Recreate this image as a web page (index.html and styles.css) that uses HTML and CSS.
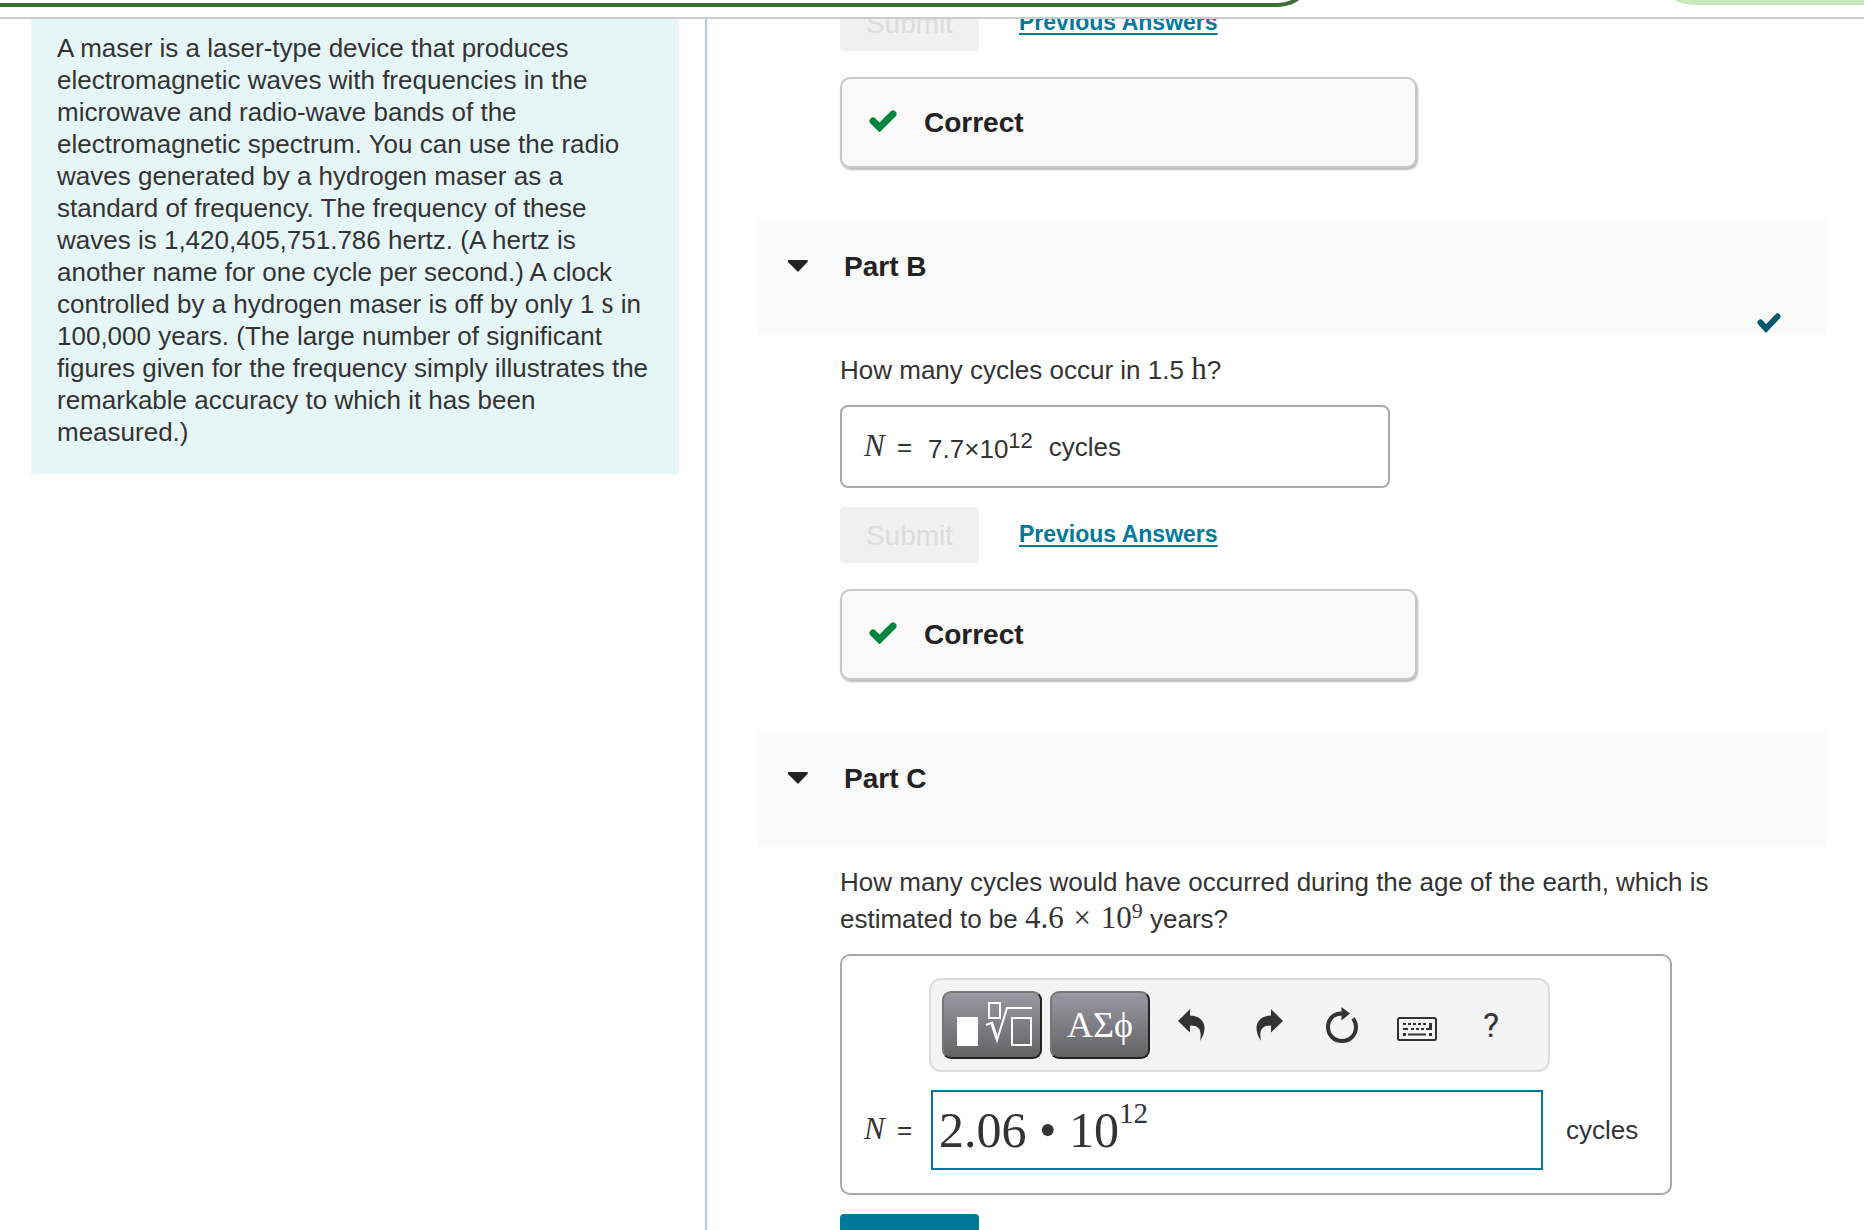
FILE: index.html
```html
<!DOCTYPE html>
<html lang="en">
<head>
<meta charset="utf-8">
<meta name="viewport" content="width=device-width, initial-scale=1">
<title>Maser frequency problem</title>
<link rel="stylesheet" href="styles.css">
</head>
<body>
<header class="topbar">
  <div class="pill pill-outline"></div>
  <div class="pill pill-solid"></div>
</header>
<main class="panes">
  <aside class="context">
    <div class="context-box">
      <p>A maser is a laser-type device that produces electromagnetic waves with frequencies in the microwave and radio-wave bands of the electromagnetic spectrum. You can use the radio waves generated by a hydrogen maser as a standard of frequency. The frequency of these waves is 1,420,405,751.786 hertz. (A hertz is another name for one cycle per second.) A clock controlled by a hydrogen maser is off by only 1 <span class="math">s</span> in 100,000 years. (The large number of significant figures given for the frequency simply illustrates the remarkable accuracy to which it has been measured.)</p>
    </div>
  </aside>

  <div class="work">
    <div class="work-content">
      <section class="part">
        <div class="part-body">
          <div class="actions">
            <button class="submit" type="button" disabled>Submit</button>
            <a class="previous" href="#">Previous Answers</a>
          </div>
          <div class="feedback">
            <svg class="tick" viewBox="0 0 28 22" aria-hidden="true"><path d="M4 11 L10.500 17.500 L24 4"/></svg>
            <span>Correct</span>
          </div>
        </div>
      </section>

      <section class="part">
        <div class="part-head">
          <button class="toggle" type="button" aria-expanded="true" aria-label="Collapse Part B">
            <svg viewBox="0 0 22 14" aria-hidden="true"><path d="M1.500 0 H20 Q21.500 0.500 20.500 2 L11 12 L1 2 Q0 0.500 1.500 0Z"/></svg>
          </button>
          <h2>Part B</h2>
          <svg class="done" viewBox="0 0 24 20" role="img" aria-label="Completed"><path d="M3.500 9.500 L9 15.500 L20.500 3.500"/></svg>
        </div>
        <div class="part-body">
          <p class="question">How many cycles occur in 1.5 <span class="math">h</span>?</p>
          <div class="answer">
            <span><i class="math symbol">N</i> =</span>
            <span class="value">7.7×10<sup>12</sup></span>
            <span>cycles</span>
          </div>
          <div class="actions">
            <button class="submit" type="button" disabled>Submit</button>
            <a class="previous" href="#">Previous Answers</a>
          </div>
          <div class="feedback">
            <svg class="tick" viewBox="0 0 28 22" aria-hidden="true"><path d="M4 11 L10.500 17.500 L24 4"/></svg>
            <span>Correct</span>
          </div>
        </div>
      </section>

      <section class="part">
        <div class="part-head">
          <button class="toggle" type="button" aria-expanded="true" aria-label="Collapse Part C">
            <svg viewBox="0 0 22 14" aria-hidden="true"><path d="M1.500 0 H20 Q21.500 0.500 20.500 2 L11 12 L1 2 Q0 0.500 1.500 0Z"/></svg>
          </button>
          <h2>Part C</h2>
        </div>
        <div class="part-body">
          <p class="question">How many cycles would have occurred during the age of the earth, which is estimated to be <span class="math">4.6 <span class="operator">×</span> 10<sup>9</sup></span> years?</p>
          <div class="editor">
            <div class="toolbar" role="toolbar" aria-label="Equation tools">
              <button class="palette" type="button" aria-label="Templates">
                <svg viewBox="0 0 96 64" aria-hidden="true">
                  <rect x="13" y="24" width="21" height="29" fill="#fff"/>
                  <path d="M45 10 h11 v15 h-11 z M68 25 h19 v27 h-19 z"/>
                  <path d="M42 32 L48 29.500 L53 47 L63 15 H88"/>
                  <path class="heavy" d="M48 31 L53 46"/>
                </svg>
              </button>
              <button class="palette" type="button" aria-label="Symbols">ΑΣϕ</button>
              <button class="tool undo" type="button" aria-label="Undo">
                <svg viewBox="0 0 36 36" aria-hidden="true"><path d="M4 14 L16 2 V8.500 C28 8.500 36 19 26 34 C28 24 26 18.500 16 18.500 V25.500 Z"/></svg>
              </button>
              <button class="tool" type="button" aria-label="Redo">
                <svg viewBox="0 0 36 36" aria-hidden="true"><path d="M32 14 L20 2 V8.500 C8 8.500 0 19 10 34 C8 24 10 18.500 20 18.500 V25.500 Z"/></svg>
              </button>
              <button class="tool" type="button" aria-label="Reset">
                <svg viewBox="0 0 36 36" aria-hidden="true"><path class="ring" d="M17.500 6.500 C9 6 3 12 3 20 C3 28 9 34 17 34 C25 34 31 28 31 20 C31 16.500 30 14 28 11.500"/><path d="M16.500 0 L25 6.500 L16.500 13.500 Z"/></svg>
              </button>
              <button class="tool" type="button" aria-label="Keyboard shortcuts">
                <svg class="keys" viewBox="0 0 40 24" aria-hidden="true">
                  <rect class="frame" x="1" y="1" width="38" height="22" rx="1.500"/>
                  <path d="M6 6h3v2h-3z M11 6h3v2h-3z M16 6h3v2h-3z M21 6h3v2h-3z M26 6h3v2h-3z M32 6h3v7h-6v-2h3z M6 11h5v2h-5z M14 11h3v2h-3z M19 11h3v2h-3z M24 11h3v2h-3z M6 16h3v3h-3z M11 16.500h18v2h-18z M32 16h3v3h-3z"/>
                </svg>
              </button>
              <button class="tool help" type="button" aria-label="Help">?</button>
            </div>
            <span class="variable" id="n-label"><i class="math symbol">N</i> =</span>
            <div class="mathfield" role="textbox" contenteditable="true" spellcheck="false" aria-labelledby="n-label">2.06 • 10<sup>12</sup></div>
            <span class="unit">cycles</span>
          </div>
          <div class="actions">
            <button class="submit active" type="button">Submit</button>
          </div>
        </div>
      </section>
    </div>
  </div>
</main>
</body>
</html>
```
FILE: styles.css
```css
* { box-sizing: border-box; }

body {
  margin: 0;
  height: 100vh;
  display: flex;
  flex-direction: column;
  overflow: hidden;
  background: #fff;
  color: #333;
  font: 26px/32px "Liberation Sans", Arial, sans-serif;
}

p, h2 { margin: 0; }
button { font-family: inherit; }

/* Bottom edge of the navigation bar */
.topbar {
  flex: none;
  display: grid;
  grid-template-columns: 1314fr 343fr 207fr;
  grid-template-rows: 7px;
  align-items: end;
  height: 19px;
  border-bottom: 2px solid #ccc;
  overflow: hidden;
}
.pill { height: 72px; }
.pill-outline {
  border: 4px solid #3c6e37;
  border-left: 0;
  border-radius: 0 0 36px 0;
}
.pill-solid {
  grid-column: 3;
  margin-bottom: 2px;
  background: #c9e8bf;
  border-radius: 0 0 0 36px;
}

.panes {
  flex: 1;
  min-height: 0;
  display: grid;
  grid-template-columns: minmax(0, 707fr) minmax(0, 1157fr);
}

.context {
  padding: 0 26px 0 31px;
  border-right: 2px solid #b8cbdc;
}
.context-box {
  padding: 13px 26px;
  padding-bottom: 26px;
  background: #e6f6f7;
}

.math {
  font-family: "Liberation Serif", "Times New Roman", serif;
  font-size: 31px;
  line-height: 1px;
}
.symbol { margin-right: 5px; }
.operator { margin: 0 2px; }
sup {
  font-size: 22px;
  line-height: 1px;
  vertical-align: 10px;
}

.work {
  padding: 0 39px 0 52px;
  overflow: hidden;
}
.work-content { margin-top: -24px; }
.part { margin-bottom: 52px; }

.part-head {
  display: flex;
  align-items: flex-start;
  height: 113px;
  padding: 24px 44px 0 28px;
  background: #f9f9f9;
}
.part-head h2 {
  margin-left: 35px;
  color: #222;
  font-size: 28px;
  line-height: 46px;
}
.toggle {
  width: 22px;
  height: 46px;
  padding: 0;
  border: 0;
  background: none;
}
.toggle svg {
  display: block;
  width: 22px;
  height: 14px;
  fill: #222;
}
.done {
  align-self: flex-end;
  width: 24px;
  height: 20px;
  margin-left: auto;
  fill: none;
  stroke: #00586f;
  stroke-width: 6;
  stroke-linecap: round;
  stroke-linejoin: miter;
}

.part-body { padding-left: 81px; }
.question {
  max-width: 900px;
  padding: 19px 0 16px;
  line-height: 37px;
}

.answer {
  display: flex;
  align-items: center;
  gap: 16px;
  width: 550px;
  max-width: 100%;
  height: 83px;
  padding-left: 22px;
  border: 2px solid #a9a9a9;
  border-radius: 8px;
}
.value { padding-top: 4px; }

.actions {
  display: flex;
  align-items: center;
  gap: 40px;
  margin: 19px 0 26px;
}
.part:first-child .actions { margin-top: 0; }
.submit {
  width: 139px;
  height: 56px;
  padding: 2px 0 0;
  border: 0;
  border-radius: 4px;
  background: #f0f0f0;
  color: #dcdcdc;
  font-size: 28px;
}
.submit.active {
  background: #007a9c;
  color: #fff;
}
.previous {
  padding-bottom: 2px;
  color: #007a9c;
  font-size: 23px;
  font-weight: bold;
  text-decoration-thickness: 2px;
  text-underline-offset: 3px;
  text-decoration-skip-ink: none;
}

.feedback {
  display: flex;
  align-items: center;
  gap: 27px;
  width: 577px;
  max-width: 100%;
  height: 91px;
  padding-left: 27px;
  border: 2px solid #c8c8c8;
  border-radius: 10px;
  background: #f9f9f9;
  box-shadow: 1px 2px 2px #bbb;
  color: #222;
  font-size: 28px;
  font-weight: bold;
}
.tick {
  width: 28px;
  height: 22px;
  margin-bottom: 3px;
  fill: none;
  stroke: #00853e;
  stroke-width: 7;
  stroke-linecap: round;
  stroke-linejoin: miter;
}

.editor {
  display: grid;
  grid-template-columns: 65px minmax(0, 1fr) 98px;
  align-items: center;
  row-gap: 18px;
  width: 832px;
  max-width: 100%;
  padding: 22px 22px 23px;
  border: 2px solid #a9a9a9;
  border-radius: 10px;
}
.toolbar {
  grid-column: 2;
  display: flex;
  align-items: center;
  height: 94px;
  padding-left: 11px;
  border: 2px solid #dcdcdc;
  border-radius: 12px;
  background: #f4f4f4;
}
.palette {
  width: 100px;
  height: 68px;
  margin-right: 8px;
  padding: 0;
  border: 2px solid;
  border-color: #777 #222 #222 #777;
  border-radius: 9px;
  background: linear-gradient(#9a98a3, #636363);
  color: #fff;
  font-family: "Liberation Serif", serif;
  font-size: 36px;
  line-height: 60px;
}
.palette svg {
  display: block;
  fill: none;
  stroke: #fff;
  stroke-width: 2;
}
.palette rect { stroke: none; }
.palette .heavy { stroke-width: 3; }
.tool {
  display: flex;
  align-items: center;
  justify-content: center;
  width: 74px;
  height: 68px;
  padding: 0;
  border: 0;
  background: none;
  color: #333;
  font-size: 34px;
}
.undo {
  width: 68px;
  margin-right: 6px;
}
.tool svg {
  width: 36px;
  height: 36px;
  fill: #333;
}
.tool .keys {
  width: 40px;
  height: 24px;
  margin-top: 8px;
}
.tool .ring {
  fill: none;
  stroke: #333;
  stroke-width: 4;
}
.tool .frame {
  fill: none;
  stroke: #333;
  stroke-width: 2;
}
.help { font-family: Roboto, sans-serif; }

.variable { grid-column: 1; }
.mathfield {
  height: 80px;
  margin: 0 7px 0 2px;
  padding-left: 6px;
  border: 2px solid #007a9c;
  font: 50px/76px "Liberation Serif", "Times New Roman", serif;
  white-space: nowrap;
  outline: 0;
}
.mathfield sup {
  font-size: 29px;
  vertical-align: 24px;
}
.unit { padding-left: 16px; }
```
